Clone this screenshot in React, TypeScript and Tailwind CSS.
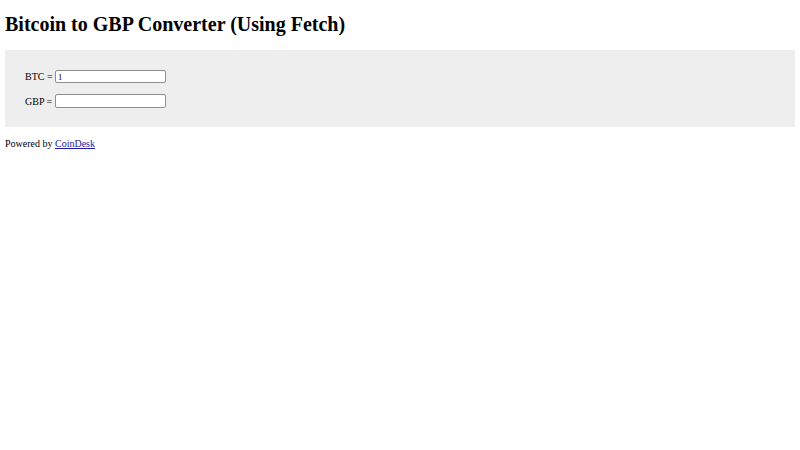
export default function App() {
  return (
    <div className="min-h-[450px] bg-white p-[5px] font-['Liberation_Serif',serif] text-black">
      <h1 className="mt-[7px] mb-[14px] text-[20px] leading-[24px] font-bold">
        Bitcoin to GBP Converter (Using Fetch)
      </h1>

      {/* converter panel */}
      <div className="flex h-[77px] flex-col gap-[11px] bg-[#eeeeee] px-5 pt-5 text-[10px] leading-[13px]">
        <div className="flex items-center">
          <label htmlFor="btc" className="w-[30px]">BTC =</label>
          <input
            id="btc"
            defaultValue="1"
            className="h-[13px] w-[111px] rounded-[2px] border border-[#8f8f8f] bg-white px-[2px] text-[8.5px] leading-none"
          />
        </div>
        <div className="flex items-center">
          <label htmlFor="gbp" className="w-[30px]">GBP =</label>
          <input
            id="gbp"
            className="h-[14px] w-[111px] rounded-[2px] border border-[#8f8f8f] bg-white px-[2px] text-[8.5px] leading-none"
          />
        </div>
      </div>

      <p className="mt-[10px] text-[10px] leading-[13px]">
        Powered by{" "}
        <a href="#" className="text-[#1a1aa6] underline">
          CoinDesk
        </a>
      </p>
    </div>
  );
}
